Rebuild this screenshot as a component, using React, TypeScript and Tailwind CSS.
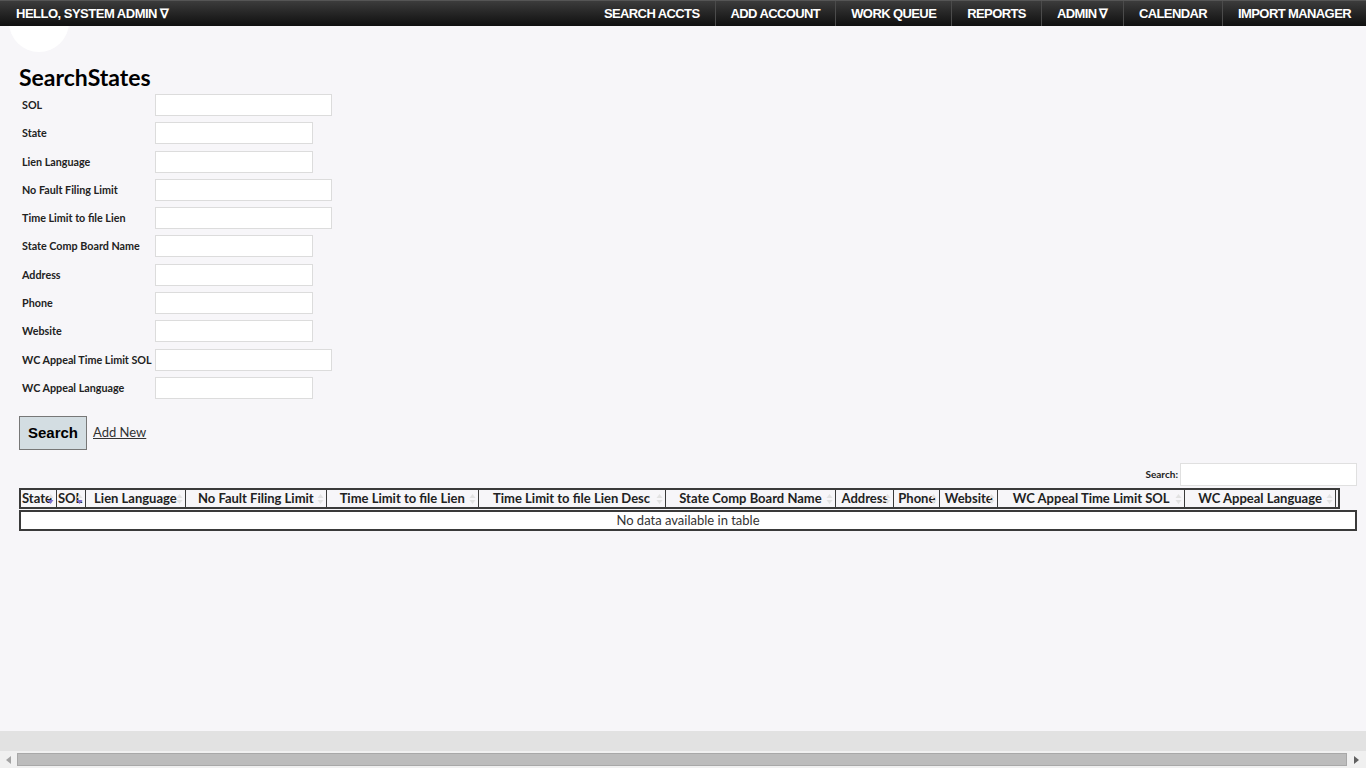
import React from 'react';

const navItems = ['SEARCH ACCTS', 'ADD ACCOUNT', 'WORK QUEUE', 'REPORTS', 'ADMIN ∇', 'CALENDAR', 'IMPORT MANAGER'];

const fields: { label: string; wide: boolean }[] = [
  { label: 'SOL', wide: true },
  { label: 'State', wide: false },
  { label: 'Lien Language', wide: false },
  { label: 'No Fault Filing Limit', wide: true },
  { label: 'Time Limit to file Lien', wide: true },
  { label: 'State Comp Board Name', wide: false },
  { label: 'Address', wide: false },
  { label: 'Phone', wide: false },
  { label: 'Website', wide: false },
  { label: 'WC Appeal Time Limit SOL', wide: true },
  { label: 'WC Appeal Language', wide: false },
];

const columns: { title: string; w: string; sorted?: boolean }[] = [
  { title: 'State', w: 'w-[36px] justify-start pl-[1px]', sorted: true },
  { title: 'SOL', w: 'w-[29px] justify-start pl-[1px]', sorted: true },
  { title: 'Lien Language', w: 'w-[100px] justify-center' },
  { title: 'No Fault Filing Limit', w: 'w-[141px] justify-center' },
  { title: 'Time Limit to file Lien', w: 'w-[152px] justify-center' },
  { title: 'Time Limit to file Lien Desc', w: 'w-[187px] justify-center' },
  { title: 'State Comp Board Name', w: 'w-[171px] justify-center' },
  { title: 'Address', w: 'w-[58px] justify-center' },
  { title: 'Phone', w: 'w-[46px] justify-center' },
  { title: 'Website', w: 'w-[58px] justify-center' },
  { title: 'WC Appeal Time Limit SOL', w: 'w-[187px] justify-center' },
  { title: 'WC Appeal Language', w: 'w-[151px] justify-center' },
];

function SortIcon({ sorted }: { sorted?: boolean }) {
  return (
    <svg width="7" height="12" viewBox="0 0 7 12" className="absolute right-[2px] top-[3px]">
      <path d="M3.5 1 L6.5 5 L0.5 5 Z" fill="#e2e2e2" />
      <path d="M3.5 11 L6.5 7 L0.5 7 Z" fill={sorted ? '#7b6fd0' : '#e2e2e2'} />
    </svg>
  );
}

export default function App() {
  return (
    <div className="flex h-screen flex-col overflow-hidden bg-[#f7f6f9] font-['Lato','Noto_Sans',sans-serif] text-[#333]">
      {/* top bar */}
      <div className="relative z-10 flex h-[26px] items-stretch justify-between border-t border-[#555] bg-gradient-to-b from-[#3c3c3c] to-[#101010] font-['Liberation_Sans',sans-serif] text-[13px] font-bold text-white">
        <div className="flex items-center pl-[16px] tracking-[-0.5px]">HELLO, SYSTEM ADMIN ∇</div>
        <div className="flex items-stretch">
          {navItems.map((item, i) => (
            <div
              key={item}
              className={`flex items-center px-[15px] tracking-[-0.6px] ${i > 0 ? 'border-l border-[#4b4b4b]' : ''}`}
            >
              {item}
            </div>
          ))}
        </div>
      </div>

      <div className="relative flex-1 pl-[19px] pr-[9px]">
        <div className="absolute left-[9px] top-[-38px] h-[64px] w-[60px] rounded-full bg-white" />

        <h1 className="pt-[36px] text-[23px] font-bold leading-[30px] text-black">SearchStates</h1>

        <div className="ml-[3px] mt-[2px] flex flex-col gap-[6.3px]">
          {fields.map((f) => (
            <div key={f.label} className="flex h-[22px] items-center">
              <label className="w-[133px] whitespace-nowrap text-[10.75px] font-bold text-[#222]">{f.label}</label>
              <input
                type="text"
                className={`h-[22px] border border-[#dcdcdc] bg-white ${f.wide ? 'w-[177px]' : 'w-[158px]'}`}
              />
            </div>
          ))}
        </div>

        <div className="mt-[17px] flex items-center gap-[6px]">
          <button className="h-[34px] w-[68px] border border-[#777] bg-[#d3dde2] font-['Liberation_Sans',sans-serif] text-[15px] font-bold text-black">
            Search
          </button>
          <a className="text-[13px] text-[#333] underline" href="#">
            Add New
          </a>
        </div>

        <div className="mt-[13px] flex items-center justify-end gap-[2px]">
          <span className="text-[10px] font-bold text-[#222]">Search:</span>
          <input type="text" className="h-[23px] w-[177px] border border-[#e0e0e0] bg-white" />
        </div>

        <div className="mt-[2px] flex w-[1321px] border-2 border-[#3a3a3a]">
          {columns.map((c) => (
            <div
              key={c.title}
              className={`relative flex h-[17px] items-center overflow-hidden whitespace-nowrap border-r border-[#3a3a3a] text-[13px] font-bold leading-none text-[#222] ${c.w}`}
            >
              {c.title}
              <SortIcon sorted={c.sorted} />
            </div>
          ))}
          <div className="w-[2px]" />
        </div>

        <div className="mt-[1px] flex h-[21px] items-center justify-center border-2 border-[#3a3a3a] bg-white text-[13px] text-[#333]">
          No data available in table
        </div>
      </div>

      <div className="h-[20px] bg-[#e2e2e2]" />
      {/* horizontal scrollbar */}
      <div className="flex h-[17px] items-center bg-[#f0f0f0]">
        <div className="flex w-[17px] justify-center">
          <svg width="5" height="8" viewBox="0 0 5 8">
            <path d="M5 0 L0 4 L5 8 Z" fill="#a3a3a3" />
          </svg>
        </div>
        <div className="h-[13px] flex-1 border border-[#a8a8a8] bg-[#bcbcbc]" />
        <div className="flex w-[19px] justify-center">
          <svg width="5" height="8" viewBox="0 0 5 8">
            <path d="M0 0 L5 4 L0 8 Z" fill="#606060" />
          </svg>
        </div>
      </div>
    </div>
  );
}
